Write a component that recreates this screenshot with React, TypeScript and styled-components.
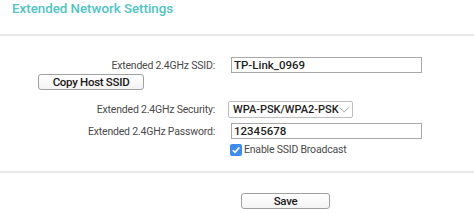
import styled, { createGlobalStyle } from 'styled-components';

const Global = createGlobalStyle`
  body {
    margin: 0;
    background: #fff;
    font-family: Roboto, "Liberation Sans", sans-serif;
  }
`;

const Title = styled.h1`
  margin: 0;
  padding: 0 0 0 12px;
  height: 34px;
  line-height: 18px;
  font-size: 13.3px;
  font-weight: 500;
  color: #4fc4c4;
`;

const Divider = styled.div`
  height: 2px;
  background: #e8e8e8;
`;

const Form = styled.div`
  display: grid;
  grid-template-columns: 215px 1fr;
  column-gap: 15px;
  padding-top: 21px;
  padding-bottom: 15px;
`;

const Label = styled.div<{ $top?: number }>`
  text-align: right;
  font-size: 10.5px;
  letter-spacing: -0.2px;
  color: #4a4a4a;
  margin-top: ${(p) => p.$top ?? 0}px;
  align-self: center;
`;

const Cell = styled.div<{ $top?: number }>`
  margin-top: ${(p) => p.$top ?? 0}px;
  display: flex;
  align-items: center;
`;

const TextBox = styled.div`
  box-sizing: border-box;
  width: 191px;
  height: 16px;
  margin-left: 1px;
  border: 1px solid #a8a8a8;
  padding: 0 2px;
  font-size: 11.5px;
  font-weight: 500;
  line-height: 14px;
  color: #1e1e1e;
`;

const Select = styled.div`
  box-sizing: border-box;
  width: 125px;
  height: 17px;
  margin-left: -2px;
  border: 1px solid #bdbdbd;
  border-radius: 2px;
  padding: 0 3px 0 4px;
  display: flex;
  align-items: center;
  justify-content: space-between;
  white-space: nowrap;
  font-size: 11px;
  font-weight: 500;
  color: #1e1e1e;
`;

const Button = styled.div<{ $width: number; $left?: number }>`
  box-sizing: border-box;
  width: ${(p) => p.$width}px;
  height: 16px;
  margin-left: ${(p) => p.$left ?? 0}px;
  border: 1px solid #a0a0a0;
  border-radius: 3px;
  background: linear-gradient(#ffffff, #f3f3f3);
  text-align: center;
  font-size: 11.5px;
  font-weight: 500;
  letter-spacing: -0.3px;
  line-height: 14px;
  color: #1a1a1a;
`;

const ButtonCell = styled.div`
  grid-column: 1 / 2;
  margin-top: 1px;
`;

const Check = styled.div`
  width: 12px;
  height: 12px;
  border-radius: 2px;
  background: #3d8df5;
  display: flex;
  align-items: center;
  justify-content: center;
`;

const CheckText = styled.span`
  margin-left: 2px;
  font-size: 10.5px;
  letter-spacing: -0.2px;
  color: #4a4a4a;
`;

const Footer = styled.div`
  padding: 20px 0 0 241px;
`;

export default function App() {
  return (
    <>
      <Global />
      <Title>Extended Network Settings</Title>
      <Divider />
      <Form>
        <Label>Extended 2.4GHz SSID:</Label>
        <Cell>
          <TextBox>TP-Link_0969</TextBox>
        </Cell>
        <ButtonCell>
          <Button $width={106} $left={38}>Copy Host SSID</Button>
        </ButtonCell>
        <div />
        <Label $top={11}>Extended 2.4GHz Security:</Label>
        <Cell $top={11}>
          <Select>
            <span>WPA-PSK/WPA2-PSK</span>
            <svg width="11" height="6" viewBox="0 0 11 6">
              <path d="M0.5 0.5 L5.5 5 L10.5 0.5" fill="none" stroke="#a0a0a0" strokeWidth="1" />
            </svg>
          </Select>
        </Cell>
        <Label $top={5}>Extended 2.4GHz Password:</Label>
        <Cell $top={5}>
          <TextBox>12345678</TextBox>
        </Cell>
        <div />
        <Cell $top={4}>
          <Check>
            <svg width="10" height="10" viewBox="0 0 10 10">
              <path d="M1.8 5.2 L4 7.4 L8.4 2.4" fill="none" stroke="#fff" strokeWidth="1.6" />
            </svg>
          </Check>
          <CheckText>Enable SSID Broadcast</CheckText>
        </Cell>
      </Form>
      <Divider />
      <Footer>
        <Button $width={89}>Save</Button>
      </Footer>
    </>
  );
}
